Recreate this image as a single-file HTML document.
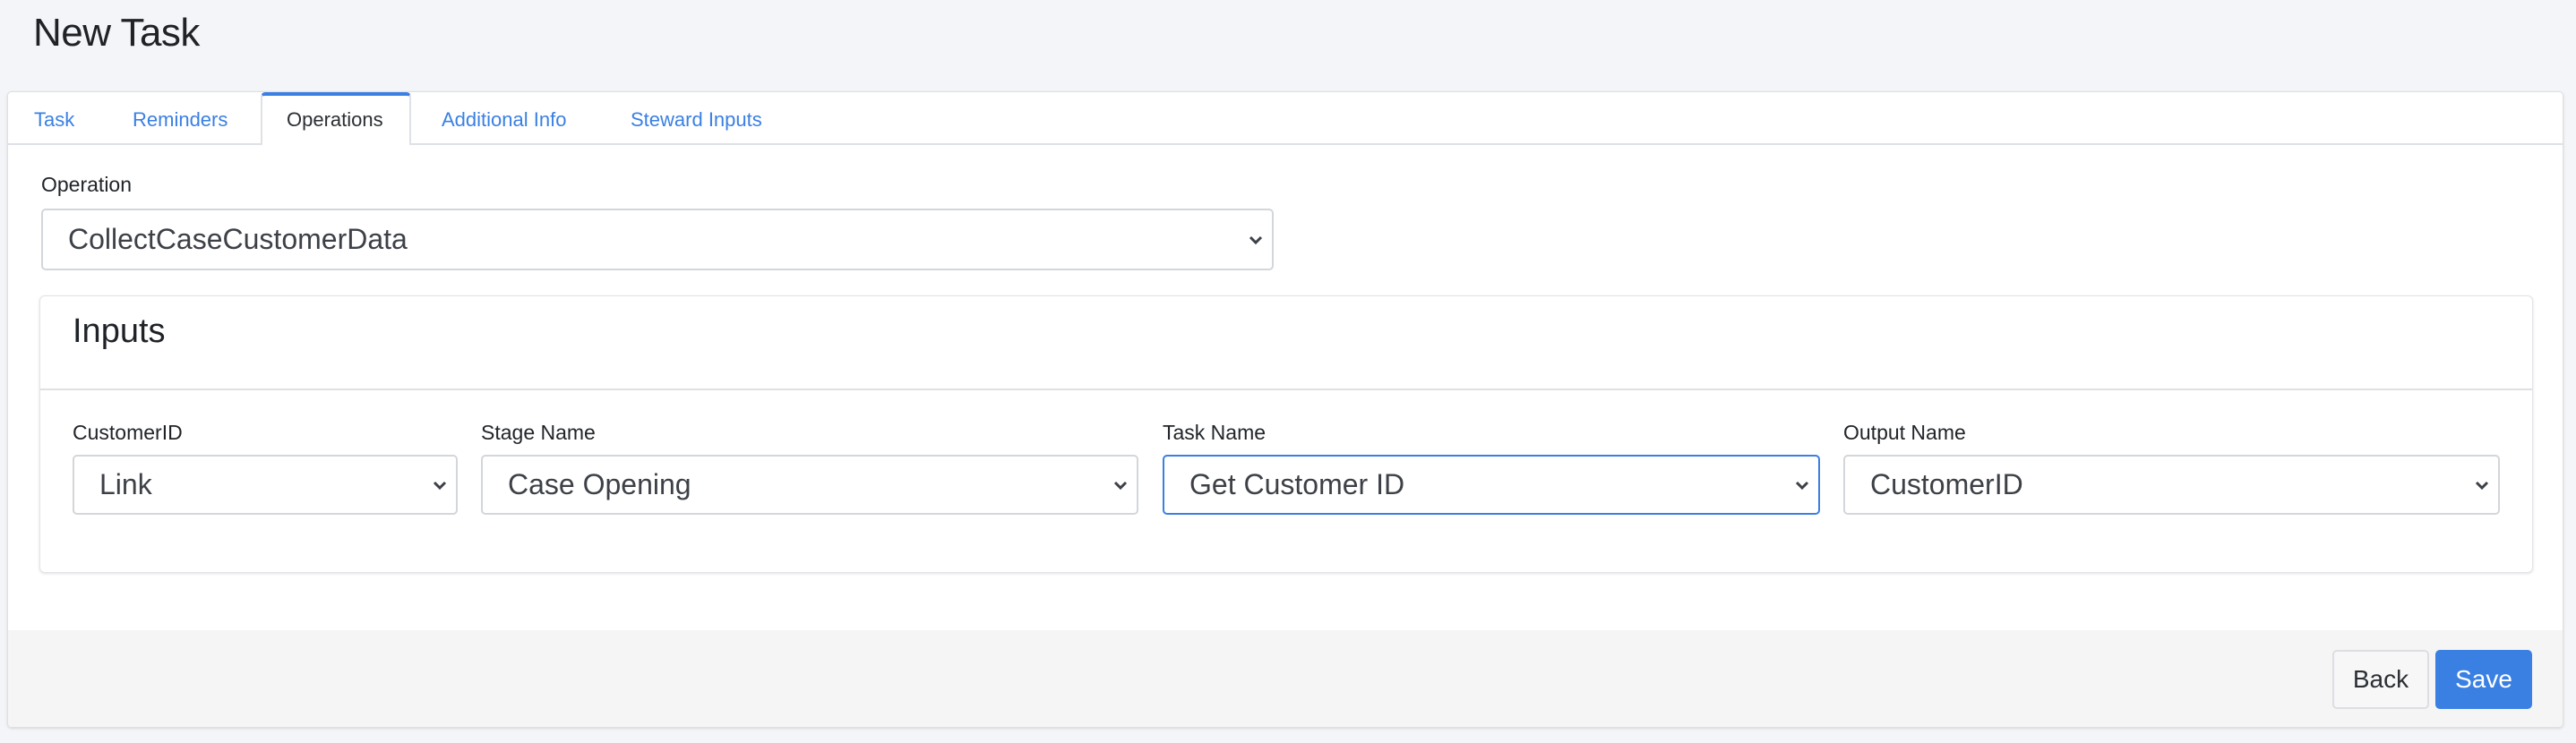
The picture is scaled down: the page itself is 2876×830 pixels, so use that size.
<!DOCTYPE html>
<html><head><meta charset="utf-8"><style>
*{box-sizing:border-box;margin:0;padding:0}
body{width:2876px;height:830px;background:#f4f5f8;font-family:"Liberation Sans",Arial,sans-serif;position:relative;overflow:hidden;color:#212529}
.abs{position:absolute}
h1{position:absolute;left:37px;top:12px;font-size:44px;font-weight:400;color:#1f2227;letter-spacing:-0.5px}
.card{left:8px;top:102px;width:2854px;height:711px;background:#fff;border:1px solid #dde0e4;border-radius:5px;box-shadow:0 1px 3px rgba(0,0,0,.12);overflow:hidden}
.tabline{left:0;top:57px;width:100%;height:2px;background:#dee2e6}
.tab{position:absolute;top:18px;font-size:22px;color:#3a80e3}
.active{left:282px;top:0;width:168px;height:59px;background:#fff;border:2px solid #dee2e6;border-bottom:none;border-top:4px solid #3a80e3;border-radius:5px 5px 0 0}
.lbl{position:absolute;font-size:23px;color:#212529}
.sel{position:absolute;background:#fff;border:2px solid #d3d6da;border-radius:5px;font-size:32px;color:#3d4147;padding-left:28px;display:flex;align-items:center}
.sel svg{position:absolute;right:10px;top:50%;margin-top:-6px}
.inputs{left:35px;top:227px;width:2784px;height:310px;border:1px solid #e2e4e8;border-radius:6px;box-shadow:0 1px 3px rgba(0,0,0,.12);background:#fff}
.footer{left:0;top:601px;width:100%;height:110px;background:#f5f5f6}
.btn{position:absolute;top:623px;height:66px;border-radius:5px;font-size:28px;display:flex;align-items:center;justify-content:center}
</style></head><body>
<h1>New Task</h1>
<div class="abs card">
  <div class="abs tabline"></div>
  <div class="abs active"></div>
  <div class="tab" style="left:29px">Task</div>
  <div class="tab" style="left:139px">Reminders</div>
  <div class="tab" style="left:311px;color:#2b2f33">Operations</div>
  <div class="tab" style="left:484px">Additional Info</div>
  <div class="tab" style="left:695px">Steward Inputs</div>

  <div class="lbl" style="left:37px;top:90px">Operation</div>
  <div class="sel" style="left:37px;top:130px;width:1376px;height:69px">CollectCaseCustomerData<svg width="16" height="12" viewBox="0 0 16 12"><path d="M2 3l6 6 6-6" fill="none" stroke="#3d4147" stroke-width="3"/></svg></div>

  <div class="abs inputs">
    <div class="abs" style="left:36px;top:18px;font-size:38px;color:#1f2227">Inputs</div>
    <div class="abs" style="left:0;top:103px;width:100%;height:2px;background:#dee0e3"></div>
    <div class="lbl" style="left:36px;top:139px">CustomerID</div>
    <div class="sel" style="left:36px;top:177px;width:430px;height:67px">Link<svg width="16" height="12" viewBox="0 0 16 12"><path d="M2 3l6 6 6-6" fill="none" stroke="#3d4147" stroke-width="3"/></svg></div>
    <div class="lbl" style="left:492px;top:139px">Stage Name</div>
    <div class="sel" style="left:492px;top:177px;width:734px;height:67px">Case Opening<svg width="16" height="12" viewBox="0 0 16 12"><path d="M2 3l6 6 6-6" fill="none" stroke="#3d4147" stroke-width="3"/></svg></div>
    <div class="lbl" style="left:1253px;top:139px">Task Name</div>
    <div class="sel" style="left:1253px;top:177px;width:734px;height:67px;border-color:#3a80e3">Get Customer ID<svg width="16" height="12" viewBox="0 0 16 12"><path d="M2 3l6 6 6-6" fill="none" stroke="#3d4147" stroke-width="3"/></svg></div>
    <div class="lbl" style="left:2013px;top:139px">Output Name</div>
    <div class="sel" style="left:2013px;top:177px;width:733px;height:67px">CustomerID<svg width="16" height="12" viewBox="0 0 16 12"><path d="M2 3l6 6 6-6" fill="none" stroke="#3d4147" stroke-width="3"/></svg></div>
  </div>

  <div class="abs footer"></div>
  <div class="btn" style="left:2595px;width:108px;background:#f7f7f8;border:2px solid #dcdee2;color:#2b2f33">Back</div>
  <div class="btn" style="left:2710px;width:108px;background:#3a80e3;color:#fff">Save</div>
</div>
</body></html>
